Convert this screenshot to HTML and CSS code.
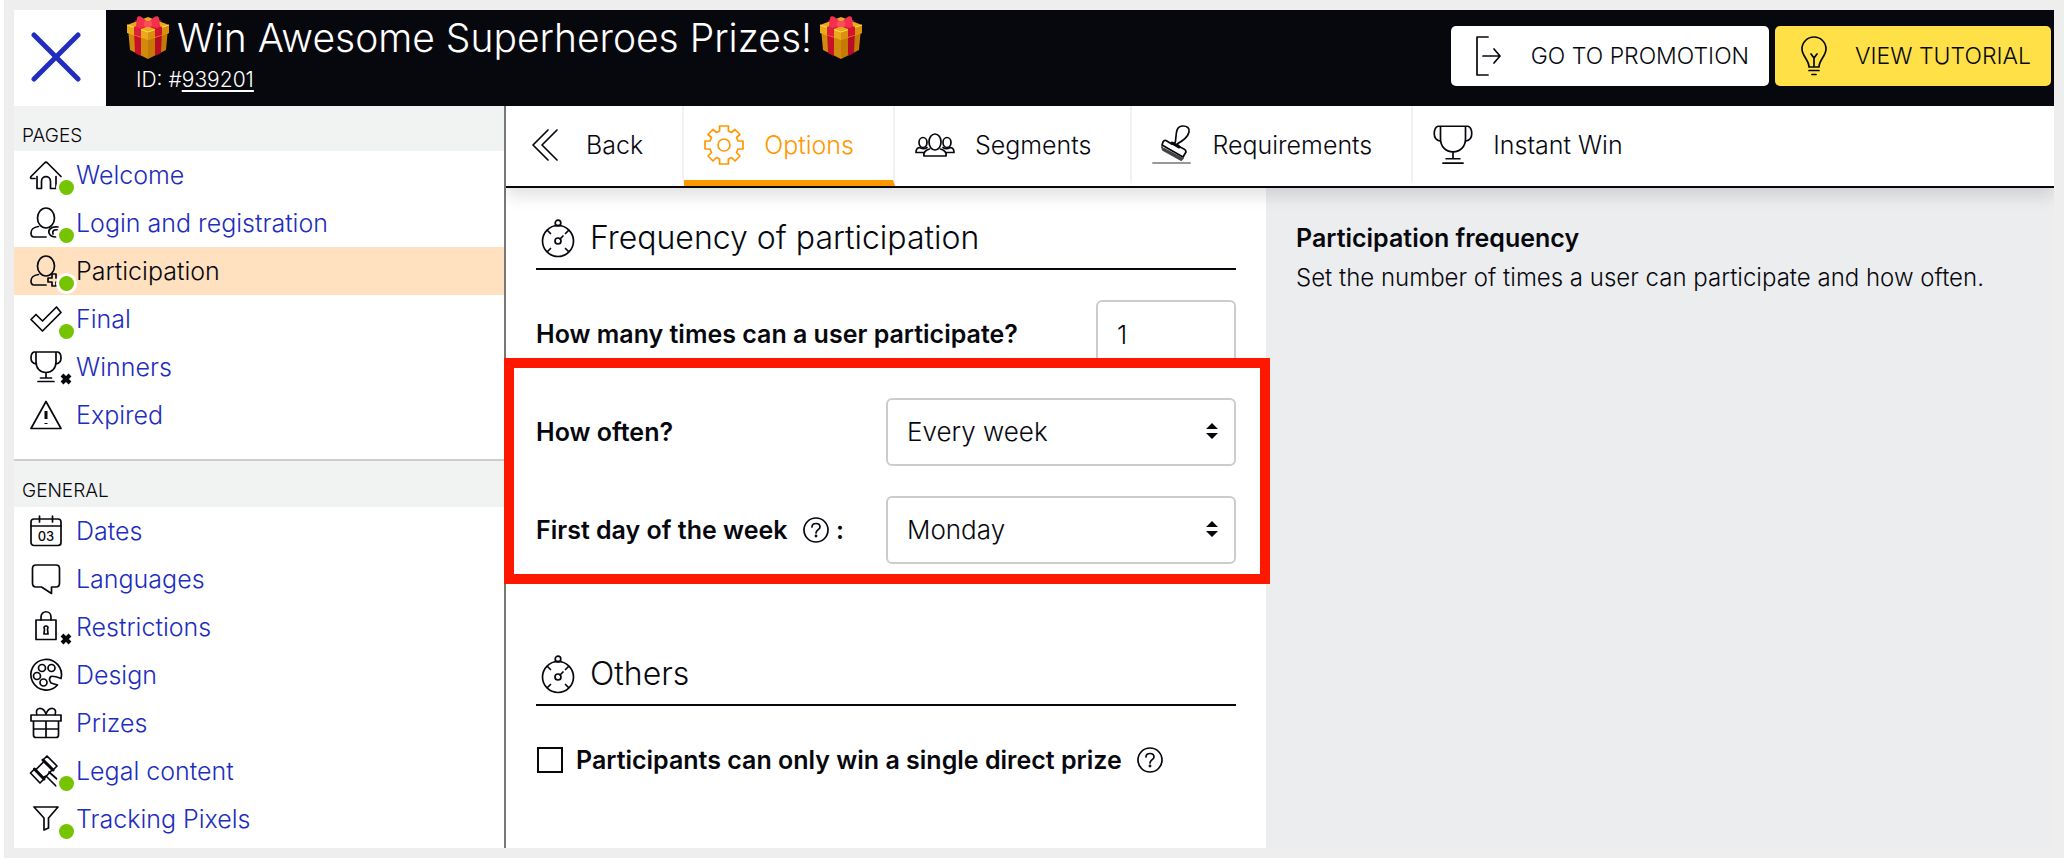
FILE: index.html
```html
<!DOCTYPE html>
<html lang="en">
<head>
<meta charset="utf-8">
<title>Win Awesome Superheroes Prizes!</title>
<link rel="stylesheet" href="styles.css">
</head>
<body>
<svg class="defs" aria-hidden="true">
  <symbol id="gift-color" viewBox="0 0 44 44">
    <path d="M2 12 22 19V43L4 34Z" fill="#d18a0c"/>
    <path d="M42 12 22 19V43L40 34Z" fill="#c47a05"/>
    <path d="M8 14 15 17V40L9 37Z" fill="#c8102a"/>
    <path d="M36 14 29 17V40L35 37Z" fill="#b80d24"/>
    <path d="M1 9 22 1 43 9 43 17 22 24 1 17Z" fill="#eba91c"/>
    <path d="M22 16 43 9V17L22 24Z" fill="#d99010"/>
    <path d="M1 9 22 16 43 9" fill="none" stroke="#ffdc4a" stroke-width="1"/>
    <path d="M8 11 30 3 36 5 15 13V21L8 19Z" fill="#e01f3c"/>
    <path d="M36 11 14 3 8 5 29 13V21L36 19Z" fill="#d4142f"/>
    <path d="M21 6C16 0 12-1 11 2L10 10C12 13 17 12 21 9ZM23 6C28 0 32-1 33 2L34 10C32 13 27 12 23 9Z" fill="#f3304e"/>
    <rect x="18" y="5" width="8" height="6" rx="2" fill="#ff4b62"/>
  </symbol>
  <symbol id="trophy" viewBox="0 0 32 32">
    <path d="M6 1H26V11C26 17 22 21.500 16 21.500S6 17 6 11ZM6 1H4Q1 2 1 7T6 13M26 1H28Q31 2 31 7T26 13M16 21.500V27M10.500 27H21.500M8 30.500H24"/>
  </symbol>
  <symbol id="person" viewBox="0 0 32 32">
    <ellipse cx="16" cy="11" rx="8.500" ry="10"/>
    <path d="M8.500 19.500C3 20.500 1 22 1 26 1 29 2 30 4 30H16"/>
  </symbol>
  <symbol id="stopwatch" viewBox="0 0 36 40">
    <circle cx="18" cy="23" r="15.500"/><circle cx="18" cy="5" r="2.800"/><circle cx="18" cy="23" r="3"/>
    <path d="M20 21 23 18M7.500 12.500 10.500 15.500M28.500 12.500 25.500 15.500M7.500 33.500 10.500 30.500M28.500 33.500 25.500 30.500M15 7.500H21"/>
  </symbol>
  <symbol id="help" viewBox="0 0 28 28">
    <circle cx="14" cy="14" r="12"/>
    <path d="M10 11C10 8.500 11.500 7.500 14 7.500S18 9 18 11C18 13.500 14 14 14 17"/><circle cx="14" cy="20" r=".6"/>
  </symbol>
  <symbol id="updown" viewBox="0 0 12 16"><path d="M0 6 6 0 12 6ZM0 10H12L6 16Z" fill="currentColor" stroke="none"/></symbol>
  <symbol id="cross" viewBox="0 0 12 12"><path d="M2 2 10 10M10 2 2 10" stroke-width="4" stroke-linecap="butt"/></symbol>
</svg>

<div class="app">
  <header class="topbar">
    <button class="close" type="button" aria-label="Close">
      <svg viewBox="0 0 50 50" class="close-icon"><path d="M3 3 47 47M47 3 3 47"/></svg>
    </button>
    <div class="heading">
      <h1 class="title"><svg class="gift"><use href="#gift-color"/></svg><span>Win Awesome Superheroes Prizes!</span><svg class="gift"><use href="#gift-color"/></svg></h1>
      <p class="promo-id">ID: #<a href="#">939201</a></p>
    </div>
    <div class="actions">
      <button class="btn" type="button">
        <svg class="icon btn-icon" viewBox="0 0 40 40"><path d="M19 1H8V39H19M14 20H31M25 13 31 20 25 27"/></svg>
        <span>GO TO PROMOTION</span>
      </button>
      <button class="btn btn-yellow" type="button">
        <svg class="icon btn-icon" viewBox="0 0 40 40"><path d="M16 31C16 24 9 20 9 13A12 12 0 0 1 33 13C33 20 26 24 26 31ZM16 34.500H26M19 38.500H23M21 30V22M18 18 21 22 24 18"/></svg>
        <span>VIEW TUTORIAL</span>
      </button>
    </div>
  </header>

  <div class="body">
    <aside class="sidebar">
      <nav class="group">
        <h2 class="group-title">PAGES</h2>
        <a class="item" href="#"><span class="item-icon"><svg class="icon" viewBox="0 0 32 32"><path d="M7 17.500V29.500H11.500V22.500C11.500 16 20.500 16 20.500 22.500V29.500H26V17.500M5 19.500H1Q0 18.500 1.500 17L14.500 4Q16 2.500 17.500 4L31 17.500"/></svg><i class="dot"></i></span>Welcome</a>
        <a class="item" href="#"><span class="item-icon"><svg class="icon"><use href="#person"/></svg><svg class="icon extra" viewBox="0 0 12 12"><path d="M10 1C3 0 0 4 1 7S5 11 8 11M10 4C6 3 4 5 5 8"/></svg><i class="dot"></i></span>Login and registration</a>
        <a class="item active" href="#"><span class="item-icon"><svg class="icon"><use href="#person"/></svg><svg class="icon extra" viewBox="0 0 12 12"><path d="M4 0V4H0V8H4V12H8V8M4 0H8V4"/></svg><i class="dot"></i></span>Participation</a>
        <a class="item" href="#"><span class="item-icon"><svg class="icon" viewBox="0 0 32 32"><path d="M1 16.500 6 11.500 12.500 18 26.500 4 31 9.500 12.500 28Z"/></svg><i class="dot"></i></span>Final</a>
        <a class="item" href="#"><span class="item-icon"><svg class="icon"><use href="#trophy"/></svg><svg class="icon mark"><use href="#cross"/></svg></span>Winners</a>
        <a class="item" href="#"><span class="item-icon"><svg class="icon" viewBox="0 0 32 32"><path d="M16 2.500 31 29.500H1Z"/><path d="M16 12V20M16 24V25" stroke-width="3" stroke-linecap="butt"/></svg></span>Expired</a>
      </nav>
      <nav class="group">
        <h2 class="group-title">GENERAL</h2>
        <a class="item" href="#"><span class="item-icon"><svg class="icon" viewBox="0 0 32 32"><rect x="1" y="4" width="30" height="26.500" rx="3"/><path d="M1 11H31M9.500 1V7M22.500 1V7"/><text x="16" y="26" class="cal-text">03</text></svg></span>Dates</a>
        <a class="item" href="#"><span class="item-icon"><svg class="icon" viewBox="0 0 32 32"><path d="M6 2H26Q29.500 2 29.500 5.500V20Q29.500 24 26 24H21.500V30.500L11.500 24H6Q2.500 24 2.500 20V5.500Q2.500 2 6 2Z"/></svg></span>Languages</a>
        <a class="item" href="#"><span class="item-icon"><svg class="icon" viewBox="0 0 32 32"><rect x="6" y="9" width="20" height="19.500"/><path d="M11 9V6C11-1 21-1 21 6V9M14.500 18C12 14 20 14 17.500 18L18 23H14Z"/></svg><svg class="icon mark"><use href="#cross"/></svg></span>Restrictions</a>
        <a class="item" href="#"><span class="item-icon"><svg class="icon" viewBox="0 0 32 32"><path d="M31 19.500A15.300 15.300 0 1 0 27.500 26L21 24Q18 20 21 17.500 23 16.500 31 19.500"/><circle cx="12" cy="9" r="3.500"/><circle cx="21.500" cy="9" r="3.500"/><circle cx="7" cy="17" r="3.500"/><circle cx="13.500" cy="23.500" r="3.500"/></svg></span>Design</a>
        <a class="item" href="#"><span class="item-icon"><svg class="icon" viewBox="0 0 32 32"><path d="M1 8H31V14H1ZM3.500 14V28Q3.500 30.500 6 30.500H26Q28.500 30.500 28.500 28V14M3.500 22H28.500M16 14V30.500M7 8C4 0 13-1 16 7 19-1 28 0 25 8"/></svg></span>Prizes</a>
        <a class="item" href="#"><span class="item-icon"><svg class="icon" viewBox="0 0 32 32"><path d="M17 1 27 11 23 15 13 5ZM4.500 14 14 24 10 28 0.500 18ZM5.500 15 14 6.500M14 23.500 22.500 14.500M14 22 16 21 26 31M19 17 28 25"/><path d="M13 5 23 15M4.500 14 14 24" stroke-width="3"/></svg><i class="dot"></i></span>Legal content</a>
        <a class="item" href="#"><span class="item-icon"><svg class="icon" viewBox="0 0 32 32"><path d="M4 4H28L18.500 15V25L14 27V15ZM14 15 4 4"/></svg><i class="dot"></i></span>Tracking Pixels</a>
      </nav>
    </aside>

    <main class="main">
      <nav class="tabs">
        <a class="tab" href="#"><svg class="icon tab-icon" viewBox="0 0 40 40"><path d="M22 5 7 20 22 35M31 5 16 20 31 35"/></svg>Back</a>
        <a class="tab tab-on" href="#"><svg class="icon tab-icon" viewBox="0 0 40 40"><path d="M15.600 6V1H24.400V6L27.500 7.500 31 4.500 36 9.500 32.500 12.500 34 16H39V24H34L32.500 27.500 36 31 31 36 27.500 32.500 24.400 34V39H15.600V34L12.500 32.500 9 36 4 31 7.500 27.500 6 24H1V16H6L7.500 12.500 4 9.500 9 4.500 12.500 7.500Z"/><circle cx="20" cy="20" r="6"/></svg>Options</a>
        <a class="tab" href="#"><svg class="icon tab-icon" viewBox="0 0 40 40"><ellipse cx="20" cy="17" rx="6" ry="8"/><path d="M14.500 24Q8 26 9 31H31Q32 26 25.500 24M12 22.500Q9 25 4.500 22.500C1 23 1 27 1 27.500H9M28 22.500Q31 25 35.500 22.500C39 23 39 27 39 27.500H31"/><ellipse cx="8" cy="17.500" rx="4" ry="5"/><ellipse cx="32" cy="17.500" rx="4" ry="5"/></svg>Segments</a>
        <a class="tab" href="#"><svg class="icon tab-icon" viewBox="0 0 40 40"><path d="M23 18C25 13 22 1 31 1S40 11 25 19M22 18Q20 20 18 18L14 15.500Q12 15 11 17L10 20 31 32 34 27Q34 25 32 24L28 22 25 19"/><path d="M20 18 27 22" stroke-width="3"/><path d="M10 22 11 25 29 35 31 33M12 24 29 33" stroke-width="2" stroke="#444"/><path d="M1 38H38" stroke="#777"/></svg>Requirements</a>
        <a class="tab" href="#"><svg class="icon tab-icon"><use href="#trophy"/></svg>Instant Win</a>
      </nav>

      <div class="content">
        <form class="form">
          <h2 class="section-title"><svg class="icon section-icon"><use href="#stopwatch"/></svg>Frequency of participation</h2>
          <div class="row">
            <label class="label" for="times">How many times can a user participate?</label>
            <input class="field field-small" id="times" type="text" value="1">
          </div>
          <div class="framed">
            <div class="row">
              <label class="label" for="often">How often?</label>
              <div class="select-wrap">
                <select class="field" id="often"><option>Every week</option></select>
                <svg class="select-arrow"><use href="#updown"/></svg>
              </div>
            </div>
            <div class="row">
              <label class="label" for="first-day">First day of the week <svg class="icon help"><use href="#help"/></svg> :</label>
              <div class="select-wrap">
                <select class="field" id="first-day"><option>Monday</option></select>
                <svg class="select-arrow"><use href="#updown"/></svg>
              </div>
            </div>
          </div>
          <h2 class="section-title section-next"><svg class="icon section-icon"><use href="#stopwatch"/></svg>Others</h2>
          <div class="check-row">
            <input class="check" id="single" type="checkbox">
            <label class="label" for="single">Participants can only win a single direct prize <svg class="icon help"><use href="#help"/></svg></label>
          </div>
        </form>
        <aside class="info">
          <h3 class="info-title">Participation frequency</h3>
          <p class="info-text">Set the number of times a user can participate and how often.</p>
        </aside>
      </div>
    </main>
  </div>
</div>
</body>
</html>
```
FILE: styles.css
```css
:root {
  --ink: #07080e;
  --blue: #212dbe;
  --orange: #ff9800;
}
* { box-sizing: border-box; }
body {
  margin: 0 0 2px 4px;
  background: #fff;
  color: var(--ink);
  font: 300 25px/32px Inter, "Liberation Sans", sans-serif;
}
h1, h2, h3, p { margin: 0; font-weight: 300; }
button, input, select { font: inherit; color: inherit; }
a { color: inherit; text-decoration: none; }
.defs { position: absolute; top: 0; width: 0; height: 0; }
.icon {
  flex: none;
  fill: none;
  stroke: currentColor;
  stroke-width: 1.7;
  stroke-linecap: round;
  stroke-linejoin: round;
  overflow: visible;
}
symbol path { vector-effect: non-scaling-stroke; }

.app {
  min-height: calc(100vh - 2px);
  padding: 10px;
  background: #eee;
  display: flex;
  flex-direction: column;
}

/* Top bar */
.topbar {
  display: flex;
  height: 96px;
  background: var(--ink);
  color: #fff;
}
.close {
  width: 92px;
  padding: 0 8px 2px 0;
  border: 0;
  background: #fff;
  display: grid;
  place-items: center;
}
.close-icon { width: 50px; height: 50px; fill: none; stroke: var(--blue); stroke-width: 5; stroke-linecap: round; }
.heading { flex: 1; padding: 4px 20px; }
.title { display: flex; align-items: center; gap: 7px; font-size: 39px; line-height: 48px; }
.gift { width: 44px; height: 44px; overflow: visible; }
.promo-id { padding: 3px 10px; font-size: 21px; line-height: 30px; }
.promo-id a { text-decoration: underline; text-underline-offset: 3px; }
.actions { display: flex; gap: 6px; padding: 16px 3px 20px; }
.btn {
  display: flex;
  align-items: center;
  gap: 22px;
  padding: 0 20px 0 18px;
  border: 0;
  border-radius: 5px;
  background: #fff;
  color: var(--ink);
  font-size: 23px;
}
.btn-yellow { background: #ffe047; }
.btn-icon { width: 40px; height: 40px; }

/* Sidebar */
.body { flex: 1; display: flex; }
.sidebar { width: 492px; background: #fff; border-right: 2px solid #777; }
.group + .group { margin-top: 20px; border-top: 2px solid #ccc; }
.group-title { padding: 15px 8px 0; height: 45px; background: #f1f3f2; font-size: 19px; line-height: 30px; }
.group + .group .group-title { height: 46px; }
.item { display: flex; align-items: center; gap: 14px; height: 48px; padding-left: 16px; color: var(--blue); }
.item-icon { position: relative; display: flex; color: var(--ink); }
.item-icon > .icon:first-child { width: 32px; height: 32px; }
.active { background: #ffe0bf; color: var(--ink); }
.dot {
  position: absolute;
  right: -12px;
  bottom: -4px;
  width: 15px;
  height: 15px;
  border-radius: 50%;
  background: #76c300;
  box-shadow: 0 0 0 3px #fff;
}
.mark { position: absolute; right: -10px; bottom: -2px; width: 12px; height: 12px; }
.extra { position: absolute; right: 2px; bottom: 1px; width: 12px; height: 12px; }
.cal-text { font: 500 13px Inter, sans-serif; text-anchor: middle; fill: var(--ink); stroke: none; }

/* Tabs */
.main { flex: 1; display: flex; flex-direction: column; background: #fff; }
.tabs {
  position: relative;
  display: flex;
  height: 82px;
  background: #fff;
  border-bottom: 2px solid var(--ink);
  box-shadow: 0 8px 16px rgba(0, 0, 0, .12);
  clip-path: inset(0 0 -32px 0);
}
.tab {
  display: flex;
  align-items: center;
  gap: 20px;
  padding: 4px 39px 0 20px;
  border-right: 2px solid #f1f1f3;
  border-bottom: 6px solid transparent;
}
.tab:last-child { border-right: 0; }
.tab-on { border-bottom-color: var(--orange); color: var(--orange); }
.tab-icon { width: 40px; height: 40px; }

/* Form */
.content { flex: 1; display: flex; }
.form { width: 760px; padding: 22px 30px 0; }
.section-title {
  display: flex;
  align-items: center;
  gap: 14px;
  height: 60px;
  margin-bottom: 30px;
  padding: 0 4px 2px;
  border-bottom: 2px solid var(--ink);
  font-size: 32px;
}
.section-icon { width: 36px; height: 40px; }
.section-next { margin-top: 82px; }
.row { display: flex; align-items: center; justify-content: space-between; margin-bottom: 30px; }
.label { display: flex; align-items: center; font-weight: 600; white-space: pre; }
.field {
  width: 100%;
  height: 68px;
  padding: 0 19px;
  border: 2px solid #ccc;
  border-radius: 6px;
  background: #fff;
  font-size: 26px;
  appearance: none;
}
.field-small { width: 140px; }
.select-wrap { position: relative; width: 350px; }
.select-arrow { position: absolute; right: 18px; top: 25px; width: 12px; height: 16px; pointer-events: none; }
.framed { position: relative; }
.framed .row:last-child { margin-bottom: 0; }
.framed::after {
  content: "";
  position: absolute;
  inset: -40px -34px -20px -32px;
  border: 10px solid #ff1800;
  pointer-events: none;
}
.help { width: 28px; height: 28px; margin-left: 8px; }
.check-row { display: flex; align-items: center; gap: 13px; padding-top: 8px; }
.check { appearance: none; width: 26px; height: 26px; margin: 0 0 0 1px; border: 2px solid var(--ink); background: #fff; }

.info { flex: 1; padding: 30px; background: #ecedef; line-height: 40px; }
.info-title { font-size: 25px; font-weight: 600; }
.info-text { font-size: 24px; font-weight: 350; }
```
